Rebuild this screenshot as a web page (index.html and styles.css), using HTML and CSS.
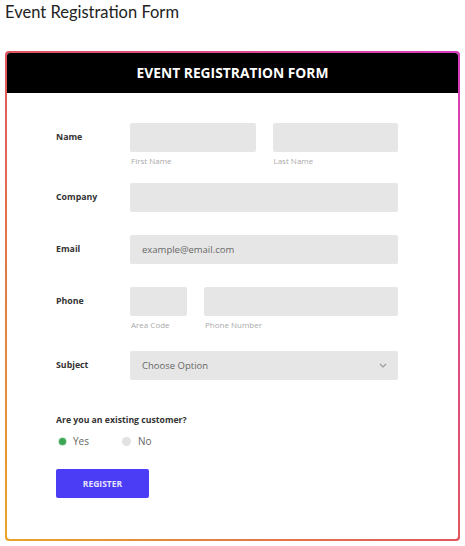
FILE: index.html
```html
<!DOCTYPE html>
<html lang="en">

<head>
    <meta charset="UTF-8">
    <meta name="viewport" content="width=device-width, initial-scale=1.0">
    <title>Event Registration Form</title>
    <link rel="stylesheet" href="styles.css">
</head>

<body>
    <h1 class="page-title">Event Registration Form</h1>

    <!-- 外框，渐变边 -->
    <div class="card">
        <div class="card-inner">
            <div class="card-head">EVENT REGISTRATION FORM</div>

            <form class="form">
                <div class="row row-name">
                    <label class="label">Name</label>
                    <div class="pair">
                        <div class="field">
                            <div class="input"></div>
                            <span class="hint">First Name</span>
                        </div>
                        <div class="field">
                            <div class="input"></div>
                            <span class="hint">Last Name</span>
                        </div>
                    </div>
                </div>

                <div class="row row-company">
                    <label class="label">Company</label>
                    <div class="input"></div>
                </div>

                <div class="row row-email">
                    <label class="label">Email</label>
                    <div class="input">example@email.com</div>
                </div>

                <div class="row row-phone">
                    <label class="label">Phone</label>
                    <div class="pair pair-phone">
                        <div class="field">
                            <div class="input"></div>
                            <span class="hint">Area Code</span>
                        </div>
                        <div class="field">
                            <div class="input"></div>
                            <span class="hint">Phone Number</span>
                        </div>
                    </div>
                </div>

                <div class="row row-subject">
                    <label class="label">Subject</label>
                    <div class="input select">
                        <span>Choose Option</span>
                        <svg class="chevron" width="8" height="5" viewBox="0 0 8 5">
                            <polyline points="1,1 4,4 7,1" fill="none" stroke="#999" stroke-width="1.1"/>
                        </svg>
                    </div>
                </div>

                <p class="question">Are you an existing customer?</p>
                <div class="radios">
                    <span class="radio"><i class="dot dot-on"></i>Yes</span>
                    <span class="radio"><i class="dot"></i>No</span>
                </div>

                <button type="button" class="btn">REGISTER</button>
            </form>
        </div>
    </div>
</body>

</html>
```

FILE: styles.css
```css
* {
    margin: 0;
    padding: 0;
    box-sizing: border-box;
}

body {
    background-color: #fff;
    padding: 0 5px;
    font-family: "Open Sans", "Liberation Sans", sans-serif;
}

.page-title {
    font-family: "Lato", "Liberation Sans", sans-serif;
    font-weight: 400;
    font-size: 16.5px;
    line-height: 24px;
    color: #222;
    margin-bottom: 27px;
}

.card {
    padding: 2px;
    border-radius: 4px;
    background: linear-gradient(to top right, #e8a52a, #e0565e 50%, #d63cbe);
}

.card-inner {
    background-color: #fff;
    border-radius: 3px;
    padding-bottom: 41px;
}

.card-head {
    height: 40px;
    line-height: 40px;
    background-color: #000;
    border-radius: 3px 3px 0 0;
    color: #fff;
    font-weight: 700;
    font-size: 13.8px;
    text-align: center;
}

.form {
    padding: 30px 0 0 49px;
}

.row {
    display: grid;
    grid-template-columns: 74px 268px;
    align-items: start;
    height: 29px;
}

.label {
    font-size: 8.8px;
    font-weight: 700;
    color: #333;
    line-height: 29px;
    height: 29px;
}

.input {
    height: 29px;
    line-height: 29px;
    background-color: #e6e6e6;
    border-radius: 2px;
    padding-left: 12px;
    font-size: 9.5px;
    color: #666;
}

.pair {
    display: grid;
    grid-template-columns: 1fr 1fr;
    column-gap: 17px;
}

.pair-phone {
    grid-template-columns: 57px 1fr;
}

.hint {
    display: block;
    margin-top: 3px;
    padding-left: 1px;
    font-size: 8px;
    line-height: 12px;
    color: #aaa;
}

.row-name {
    height: 44px;
    margin-bottom: 16px;
}

.row-company {
    margin-bottom: 23px;
}

.row-email {
    margin-bottom: 23px;
}

.row-phone {
    height: 44px;
    margin-bottom: 20px;
}

.select {
    display: flex;
    justify-content: space-between;
    align-items: center;
    padding-right: 11px;
}

.question {
    margin-top: 33px;
    font-size: 8.7px;
    font-weight: 700;
    color: #333;
    line-height: 14px;
}

.radios {
    display: flex;
    margin-top: 7px;
    line-height: 14px;
    font-size: 10px;
    color: #666;
}

.radio {
    display: flex;
    align-items: center;
    width: 66px;
}

.dot {
    width: 9px;
    height: 9px;
    border-radius: 50%;
    background-color: #e2e2e2;
    margin-right: 7px;
}

.dot-on {
    margin-left: 3px;
    margin-right: 7px;
    width: 7px;
    height: 7px;
    background-color: #3aa655;
    box-shadow: 0 0 0 1px #c8e8cf;
}

.btn {
    display: block;
    margin-top: 21px;
    width: 93px;
    height: 29px;
    border: none;
    border-radius: 2px;
    background-color: #4b3df5;
    color: #e6e2ff;
    font-family: "Open Sans", "Liberation Sans", sans-serif;
    font-weight: 700;
    font-size: 8.5px;
}
```
